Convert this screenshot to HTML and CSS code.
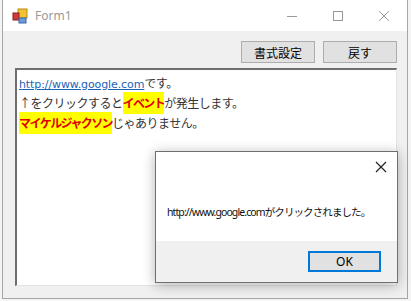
FILE: index.html
```html
<!DOCTYPE html>
<html lang="ja">
<head>
  <meta charset="UTF-8">
  <title>Form1</title>
  <link rel="stylesheet" href="styles.css">
</head>
<body>
  <div class="window">
    <div class="titlebar">
      <svg class="app-icon" width="16" height="16" viewBox="0 0 16 16">
        <rect x="6" y="1" width="9" height="9" fill="#f2c230" stroke="#b88a10"/>
        <rect x="1" y="5" width="6" height="7" fill="#d23a3a" stroke="#8e1c1c"/>
        <rect x="7" y="10" width="7" height="5" fill="#6f9ad8" stroke="#3d67a8"/>
      </svg>
      <span class="title">Form1</span>
      <div class="caption-buttons">
        <svg width="46" height="30" viewBox="0 0 46 30"><line x1="18" y1="15.5" x2="28" y2="15.5" stroke="#999" stroke-width="1"/></svg>
        <svg width="46" height="30" viewBox="0 0 46 30"><rect x="18.5" y="10.5" width="9" height="9" fill="none" stroke="#999" stroke-width="1"/></svg>
        <svg width="46" height="30" viewBox="0 0 46 30"><path d="M18 10 L28 20 M28 10 L18 20" stroke="#999" stroke-width="1"/></svg>
      </div>
    </div>
    <div class="client">
      <div class="toolbar">
        <button class="win-btn">書式設定</button>
        <button class="win-btn">戻す</button>
      </div>
      <div class="richtext">
        <p><a href="#" class="link">http://www.google.com</a>です。</p>
        <p>↑をクリックすると<span class="mark">イベント</span>が発生します。</p>
        <p><span class="mark">マイケルジャクソン</span>じゃありません。</p>
      </div>
    </div>

    <div class="msgbox">
      <div class="msg-top">
        <svg class="msg-close" width="12" height="12" viewBox="0 0 12 12"><path d="M1 1 L11 11 M11 1 L1 11" stroke="#222" stroke-width="1.2"/></svg>
        <div class="msg-text">http://www.google.comがクリックされました。</div>
      </div>
      <div class="msg-bottom">
        <button class="ok-btn">OK</button>
      </div>
    </div>
  </div>
</body>
</html>
```

FILE: styles.css
```css
/* Desktop behind the form */
body {
  margin: 0;
  background: #f4f4f4;
  font-family: "Noto Sans CJK JP", "Noto Sans", sans-serif;
  width: 411px;
  height: 301px;
  overflow: hidden;
}

.window {
  position: relative;
  margin-left: 2px;
  width: 404px;
  height: 298px;
  border: 1px solid #a6a6a6;
  border-top: none;
  background: #f0f0f0;
  display: flex;
  flex-direction: column;
}

.titlebar {
  height: 31px;
  background: #ffffff;
  display: flex;
  align-items: center;
  flex-shrink: 0;
}

.app-icon {
  margin-left: 9px;
  margin-top: 1px;
}

.title {
  margin-left: 7px;
  font-family: "Noto Sans", "Segoe UI", sans-serif;
  font-size: 12px;
  color: #999999;
}

.caption-buttons {
  margin-left: auto;
  display: flex;
}

.client {
  flex: 1;
  display: flex;
  flex-direction: column;
  padding: 10px 10px 12px 12px;
}

.toolbar {
  display: flex;
  justify-content: flex-end;
  gap: 8px;
}

.win-btn {
  width: 74px;
  height: 22px;
  padding: 0;
  background: #e1e1e1;
  border: 1px solid #adadad;
  font-family: "Noto Sans CJK JP", sans-serif;
  font-size: 12px;
  color: #000;
}

.richtext {
  flex: 1;
  margin-top: 5px;
  background: #ffffff;
  border-top: 2px solid #6e6e6e;
  border-left: 2px solid #6e6e6e;
  border-right: 1px solid #e3e3e3;
  border-bottom: 1px solid #e3e3e3;
  padding: 3px 2px;
  font-size: 12px;
  color: #333;
}

.richtext p {
  margin: 0;
  height: 20px;
  line-height: 20px;
  letter-spacing: -0.5px;
}

.link {
  color: #1a63b8;
  text-decoration: underline;
  font-family: "DejaVu Sans", sans-serif;
  font-size: 11px;
  letter-spacing: -0.1px;
}

.mark {
  background: #ffff00;
  color: #e00000;
  font-weight: bold;
  padding: 2px 0 3px;
  letter-spacing: -1.6px;
}

/* Message box over the form */
.msgbox {
  position: absolute;
  left: 152px;
  top: 151px;
  width: 241px;
  height: 130px;
  border: 1px solid #6f6f6f;
  background: #ffffff;
  box-shadow: 0 2px 12px rgba(0, 0, 0, 0.3);
  display: flex;
  flex-direction: column;
}

.msg-top {
  position: relative;
  height: 89px;
}

.msg-close {
  position: absolute;
  right: 10px;
  top: 9px;
}

.msg-text {
  position: absolute;
  left: 11px;
  top: 52px;
  font-family: "Noto Sans", "Noto Sans CJK JP", sans-serif;
  font-size: 10.5px;
  letter-spacing: -0.9px;
  color: #111;
}

.msg-bottom {
  flex: 1;
  background: #f0f0f0;
  display: flex;
  justify-content: flex-end;
  align-items: flex-start;
  padding: 10px 16px 0 0;
}

.ok-btn {
  width: 73px;
  height: 21px;
  padding: 0;
  background: #e1e1e1;
  border: 2px solid #0078d7;
  font-family: "Noto Sans", sans-serif;
  font-size: 12px;
  color: #000;
}
```
